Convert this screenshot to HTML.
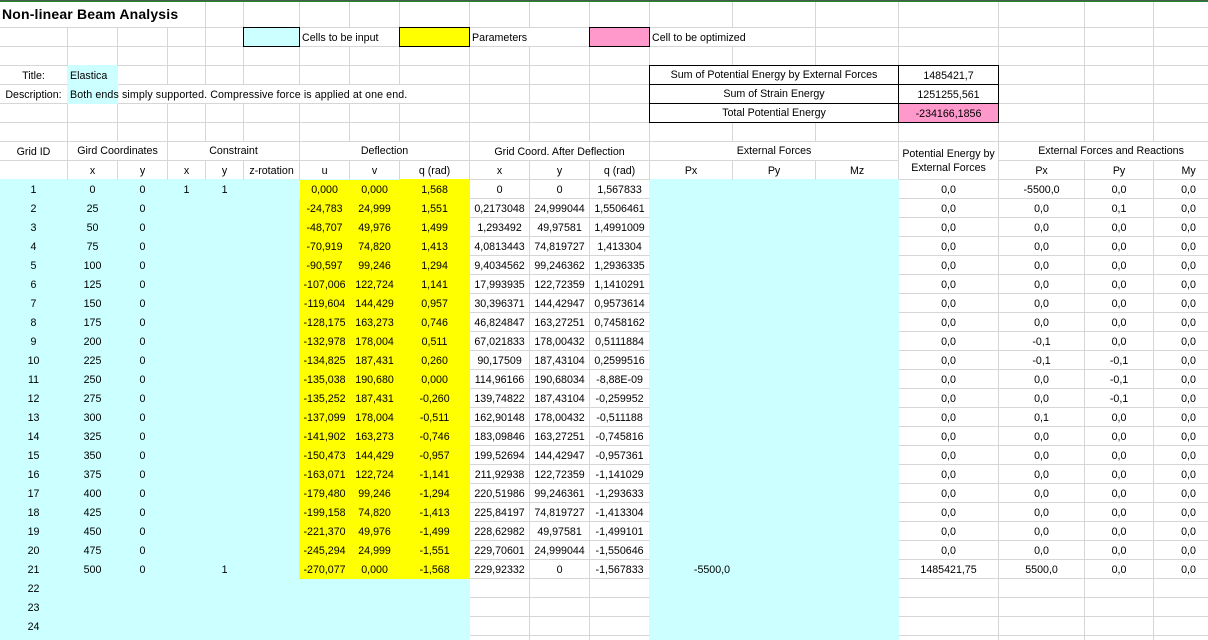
<!DOCTYPE html>
<html><head><meta charset="utf-8"><title>Non-linear Beam Analysis</title>
<style>
html,body{margin:0;padding:0;background:#fff;width:1208px;height:640px;overflow:hidden}
body{position:relative;font:10.67px/13px "Liberation Sans",Arial,sans-serif;color:#000}
table{position:absolute;left:0;top:0;border-collapse:separate;border-spacing:0;table-layout:fixed;width:1224px}
td{box-sizing:border-box;height:19px;padding:2px 0 0;border-right:1px solid #d6d6d6;border-bottom:1px solid #d6d6d6;text-align:center;white-space:nowrap;overflow:visible;vertical-align:middle}
tr.t td{height:28px}
td.l{text-align:left;padding-left:2px}
td.n{padding-top:0}
td.pe{padding-top:0;line-height:14px}
td.ti{font-weight:bold;font-size:14px;letter-spacing:.17px;text-align:left;padding:2px 0 0 2px}
td.ds{letter-spacing:.1px}
td.cy{background:#cff;border-color:#cff}
tr.h td{border-bottom-color:#cff}
tr.h td:nth-child(9){border-bottom-color:#ff0}
tr.h td:nth-child(n+10):nth-child(-n+12),tr.h td:nth-child(n+16){border-bottom-color:#d6d6d6}
tr.d td:nth-child(-n+6),tr.e td:nth-child(-n+9),tr.d td:nth-child(n+13):nth-child(-n+15),tr.e td:nth-child(n+13):nth-child(-n+15){background:#cff;border-color:#cff}
tr.d td:nth-child(n+7):nth-child(-n+9){background:#ff0;border-color:#ff0}
tr.d td:nth-child(6){border-right-color:#ff0}
tr.d td:nth-child(12),tr.e td:nth-child(12){border-right-color:#cff}
tr.d td.a{background:#cff;border-color:#ff0 #ff0 #ff0 #cff}
tr.d td.b{background:#cff;border-right-color:#cff;border-bottom-color:#ff0}
tr.d td.z{border-right-color:#cff}
tr.d td.p{border-bottom-color:#cff}
tr.d td.q{border-bottom-color:#cff;border-right-color:#cff}
tr.d td.s{background:#cff;border-bottom-color:#cff;border-right-color:#ff0}
td.r{text-align:right;padding-right:2px}
.o{position:absolute;box-sizing:border-box;border:1px solid #000}
.x{position:absolute;box-sizing:border-box;border-bottom:1px solid #000;text-align:center;line-height:18px;height:19px;white-space:nowrap}
.v{line-height:20px}
</style></head><body>
<table>
<colgroup><col style="width:68px"><col style="width:50px"><col style="width:50px"><col style="width:38px"><col style="width:38px"><col style="width:56px"><col style="width:50px"><col style="width:50px"><col style="width:70px"><col style="width:60px"><col style="width:60px"><col style="width:60px"><col style="width:83px"><col style="width:83px"><col style="width:83px"><col style="width:100px"><col style="width:86px"><col style="width:69px"><col style="width:70px"></colgroup>
<tr class="t"><td colspan="4" class="ti">Non-linear Beam Analysis</td><td></td><td></td><td></td><td></td><td></td><td></td><td></td><td></td><td></td><td></td><td></td><td></td><td></td><td></td><td></td></tr>
<tr><td></td><td></td><td></td><td></td><td></td><td></td><td colspan="2" class="l">Cells to be input</td><td></td><td colspan="2" class="l">Parameters</td><td></td><td colspan="2" class="l">Cell to be optimized</td><td></td><td></td><td></td><td></td><td></td></tr>
<tr><td></td><td style="border-bottom-color:#cff"></td><td></td><td></td><td></td><td></td><td></td><td></td><td></td><td></td><td></td><td></td><td></td><td></td><td></td><td></td><td></td><td></td><td></td></tr>
<tr><td style="border-right-color:#cff">Title:</td><td class="cy l">Elastica</td><td></td><td></td><td></td><td></td><td></td><td></td><td></td><td></td><td></td><td></td><td></td><td></td><td></td><td></td><td></td><td></td><td></td></tr>
<tr><td style="border-right-color:#cff">Description:</td><td class="cy l ds">Both ends simply supported. Compressive force is applied at one end.</td><td colspan="7"></td><td></td><td></td><td></td><td></td><td></td><td></td><td></td><td></td><td></td><td></td></tr>
<tr><td></td><td></td><td></td><td></td><td></td><td></td><td></td><td></td><td></td><td></td><td></td><td></td><td></td><td></td><td></td><td></td><td></td><td></td><td></td></tr>
<tr><td></td><td></td><td></td><td></td><td></td><td></td><td></td><td></td><td></td><td></td><td></td><td></td><td></td><td></td><td></td><td></td><td></td><td></td><td></td></tr>
<tr><td>Grid ID</td><td colspan="2" class="n">Gird Coordinates</td><td colspan="3" class="n">Constraint</td><td colspan="3" class="n">Deflection</td><td colspan="3">Grid Coord. After Deflection</td><td colspan="3" class="n">External Forces</td><td rowspan="2" class="pe">Potential Energy by<br>External Forces</td><td colspan="3" class="n">External Forces and Reactions</td></tr>
<tr class="h"><td></td><td>x</td><td>y</td><td>x</td><td>y</td><td>z-rotation</td><td>u</td><td>v</td><td>q (rad)</td><td>x</td><td>y</td><td>q (rad)</td><td>Px</td><td>Py</td><td>Mz</td><td style="border-bottom-color:#d6d6d6">Px</td><td>Py</td><td>My</td></tr>
<tr class="d"><td>1</td><td>0</td><td>0</td><td>1</td><td>1</td><td class="z"></td><td class="b">0,000</td><td class="a">0,000</td><td>1,568</td><td>0</td><td>0</td><td>1,567833</td><td></td><td></td><td></td><td>0,0</td><td>-5500,0</td><td>0,0</td><td>0,0</td></tr>
<tr class="d"><td>2</td><td>25</td><td>0</td><td></td><td></td><td></td><td>-24,783</td><td>24,999</td><td>1,551</td><td>0,2173048</td><td>24,999044</td><td>1,5506461</td><td></td><td></td><td></td><td>0,0</td><td>0,0</td><td>0,1</td><td>0,0</td></tr>
<tr class="d"><td>3</td><td>50</td><td>0</td><td></td><td></td><td></td><td>-48,707</td><td>49,976</td><td>1,499</td><td>1,293492</td><td>49,97581</td><td>1,4991009</td><td></td><td></td><td></td><td>0,0</td><td>0,0</td><td>0,0</td><td>0,0</td></tr>
<tr class="d"><td>4</td><td>75</td><td>0</td><td></td><td></td><td></td><td>-70,919</td><td>74,820</td><td>1,413</td><td>4,0813443</td><td>74,819727</td><td>1,413304</td><td></td><td></td><td></td><td>0,0</td><td>0,0</td><td>0,0</td><td>0,0</td></tr>
<tr class="d"><td>5</td><td>100</td><td>0</td><td></td><td></td><td></td><td>-90,597</td><td>99,246</td><td>1,294</td><td>9,4034562</td><td>99,246362</td><td>1,2936335</td><td></td><td></td><td></td><td>0,0</td><td>0,0</td><td>0,0</td><td>0,0</td></tr>
<tr class="d"><td>6</td><td>125</td><td>0</td><td></td><td></td><td></td><td>-107,006</td><td>122,724</td><td>1,141</td><td>17,993935</td><td>122,72359</td><td>1,1410291</td><td></td><td></td><td></td><td>0,0</td><td>0,0</td><td>0,0</td><td>0,0</td></tr>
<tr class="d"><td>7</td><td>150</td><td>0</td><td></td><td></td><td></td><td>-119,604</td><td>144,429</td><td>0,957</td><td>30,396371</td><td>144,42947</td><td>0,9573614</td><td></td><td></td><td></td><td>0,0</td><td>0,0</td><td>0,0</td><td>0,0</td></tr>
<tr class="d"><td>8</td><td>175</td><td>0</td><td></td><td></td><td></td><td>-128,175</td><td>163,273</td><td>0,746</td><td>46,824847</td><td>163,27251</td><td>0,7458162</td><td></td><td></td><td></td><td>0,0</td><td>0,0</td><td>0,0</td><td>0,0</td></tr>
<tr class="d"><td>9</td><td>200</td><td>0</td><td></td><td></td><td></td><td>-132,978</td><td>178,004</td><td>0,511</td><td>67,021833</td><td>178,00432</td><td>0,5111884</td><td></td><td></td><td></td><td>0,0</td><td>-0,1</td><td>0,0</td><td>0,0</td></tr>
<tr class="d"><td>10</td><td>225</td><td>0</td><td></td><td></td><td></td><td>-134,825</td><td>187,431</td><td>0,260</td><td>90,17509</td><td>187,43104</td><td>0,2599516</td><td></td><td></td><td></td><td>0,0</td><td>-0,1</td><td>-0,1</td><td>0,0</td></tr>
<tr class="d"><td>11</td><td>250</td><td>0</td><td></td><td></td><td></td><td>-135,038</td><td>190,680</td><td>0,000</td><td>114,96166</td><td>190,68034</td><td>-8,88E-09</td><td></td><td></td><td></td><td>0,0</td><td>0,0</td><td>-0,1</td><td>0,0</td></tr>
<tr class="d"><td>12</td><td>275</td><td>0</td><td></td><td></td><td></td><td>-135,252</td><td>187,431</td><td>-0,260</td><td>139,74822</td><td>187,43104</td><td>-0,259952</td><td></td><td></td><td></td><td>0,0</td><td>0,0</td><td>-0,1</td><td>0,0</td></tr>
<tr class="d"><td>13</td><td>300</td><td>0</td><td></td><td></td><td></td><td>-137,099</td><td>178,004</td><td>-0,511</td><td>162,90148</td><td>178,00432</td><td>-0,511188</td><td></td><td></td><td></td><td>0,0</td><td>0,1</td><td>0,0</td><td>0,0</td></tr>
<tr class="d"><td>14</td><td>325</td><td>0</td><td></td><td></td><td></td><td>-141,902</td><td>163,273</td><td>-0,746</td><td>183,09846</td><td>163,27251</td><td>-0,745816</td><td></td><td></td><td></td><td>0,0</td><td>0,0</td><td>0,0</td><td>0,0</td></tr>
<tr class="d"><td>15</td><td>350</td><td>0</td><td></td><td></td><td></td><td>-150,473</td><td>144,429</td><td>-0,957</td><td>199,52694</td><td>144,42947</td><td>-0,957361</td><td></td><td></td><td></td><td>0,0</td><td>0,0</td><td>0,0</td><td>0,0</td></tr>
<tr class="d"><td>16</td><td>375</td><td>0</td><td></td><td></td><td></td><td>-163,071</td><td>122,724</td><td>-1,141</td><td>211,92938</td><td>122,72359</td><td>-1,141029</td><td></td><td></td><td></td><td>0,0</td><td>0,0</td><td>0,0</td><td>0,0</td></tr>
<tr class="d"><td>17</td><td>400</td><td>0</td><td></td><td></td><td></td><td>-179,480</td><td>99,246</td><td>-1,294</td><td>220,51986</td><td>99,246361</td><td>-1,293633</td><td></td><td></td><td></td><td>0,0</td><td>0,0</td><td>0,0</td><td>0,0</td></tr>
<tr class="d"><td>18</td><td>425</td><td>0</td><td></td><td></td><td></td><td>-199,158</td><td>74,820</td><td>-1,413</td><td>225,84197</td><td>74,819727</td><td>-1,413304</td><td></td><td></td><td></td><td>0,0</td><td>0,0</td><td>0,0</td><td>0,0</td></tr>
<tr class="d"><td>19</td><td>450</td><td>0</td><td></td><td></td><td></td><td>-221,370</td><td>49,976</td><td>-1,499</td><td>228,62982</td><td>49,97581</td><td>-1,499101</td><td></td><td></td><td></td><td>0,0</td><td>0,0</td><td>0,0</td><td>0,0</td></tr>
<tr class="d"><td>20</td><td>475</td><td>0</td><td></td><td></td><td></td><td>-245,294</td><td class="p">24,999</td><td>-1,551</td><td>229,70601</td><td>24,999044</td><td>-1,550646</td><td></td><td></td><td></td><td>0,0</td><td>0,0</td><td>0,0</td><td>0,0</td></tr>
<tr class="d"><td>21</td><td>500</td><td>0</td><td></td><td>1</td><td></td><td class="q">-270,077</td><td class="s">0,000</td><td class="p">-1,568</td><td>229,92332</td><td>0</td><td>-1,567833</td><td class="r">-5500,0</td><td></td><td></td><td>1485421,75</td><td>5500,0</td><td>0,0</td><td>0,0</td></tr>
<tr class="e"><td>22</td><td></td><td></td><td></td><td></td><td></td><td></td><td></td><td></td><td></td><td></td><td></td><td></td><td></td><td></td><td></td><td></td><td></td><td></td></tr>
<tr class="e"><td>23</td><td></td><td></td><td></td><td></td><td></td><td></td><td></td><td></td><td></td><td></td><td></td><td></td><td></td><td></td><td></td><td></td><td></td><td></td></tr>
<tr class="e"><td>24</td><td></td><td></td><td></td><td></td><td></td><td></td><td></td><td></td><td></td><td></td><td></td><td></td><td></td><td></td><td></td><td></td><td></td><td></td></tr>
<tr class="e"><td></td><td></td><td></td><td></td><td></td><td></td><td></td><td></td><td></td><td></td><td></td><td></td><td></td><td></td><td></td><td></td><td></td><td></td><td></td></tr>
</table>
<div style="position:absolute;left:0;top:0;width:1208px;height:1px;background:#4a5a4a"></div>
<div style="position:absolute;left:0;top:1px;width:1208px;height:1px;background:#1f8a2a"></div>
<div class="o" style="left:243px;top:27px;width:57px;height:20px;background:#cff"></div>
<div class="o" style="left:399px;top:27px;width:71px;height:20px;background:#ff0"></div>
<div class="o" style="left:589px;top:27px;width:61px;height:20px;background:#f9c"></div>
<div style="position:absolute;left:649px;top:65px;width:350px;height:38px;background:#fff"></div>
<div style="position:absolute;left:649px;top:103px;width:250px;height:19px;background:#fff"></div>
<div style="position:absolute;left:898px;top:103px;width:100px;height:19px;background:#f9c"></div>
<div class="x" style="left:650px;top:66px;width:248px">Sum of Potential Energy by External Forces</div>
<div class="x" style="left:650px;top:85px;width:248px">Sum of Strain Energy</div>
<div class="x" style="left:650px;top:104px;width:248px">Total Potential Energy</div>
<div class="x v" style="left:899px;top:66px;width:99px">1485421,7</div>
<div class="x v" style="left:899px;top:85px;width:99px">1251255,561</div>
<div class="x v" style="left:899px;top:104px;width:99px">-234166,1856</div>
<div class="o" style="left:649px;top:65px;width:350px;height:58px"></div>
<div style="position:absolute;left:898px;top:65px;width:1px;height:58px;background:#000"></div>
</body></html>
